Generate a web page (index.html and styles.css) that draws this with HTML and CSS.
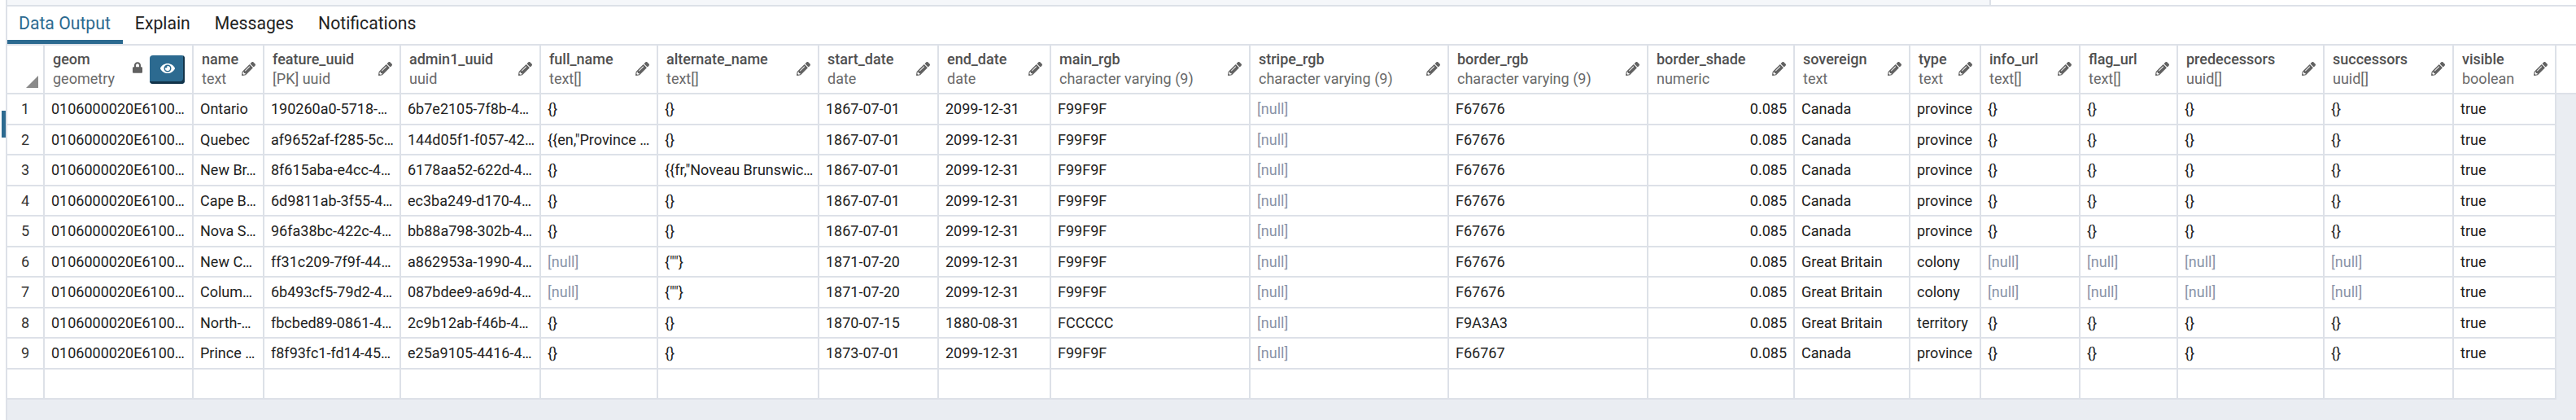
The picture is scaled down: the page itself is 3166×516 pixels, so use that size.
FILE: index.html
```html
<!DOCTYPE html>
<html lang="en">
<head>
    <meta charset="UTF-8">
    <title>Data Output</title>
    <link rel="stylesheet" href="styles.css">
</head>
<body>
<svg class="defs" aria-hidden="true">
    <symbol id="pencil" viewBox="0 0 512 512"><path d="M497.9 142.1l-46.1 46.1c-4.7 4.7-12.3 4.7-17 0l-111-111c-4.7-4.7-4.7-12.3 0-17l46.1-46.1c18.7-18.7 49.1-18.7 67.9 0l60.1 60.1c18.8 18.7 18.8 49.1 0 67.9zM284.2 99.8L21.6 362.4.4 483.9c-2.9 16.4 11.4 30.6 27.8 27.8l121.5-21.3 262.6-262.6c4.7-4.7 4.7-12.3 0-17l-111-111c-4.8-4.7-12.4-4.7-17.1 0zM124.1 339.9c-5.5-5.5-5.5-14.3 0-19.8l154-154c5.5-5.5 14.3-5.5 19.8 0s5.5 14.3 0 19.8l-154 154c-5.5 5.5-14.3 5.5-19.8 0zM88 424h48v36.3l-64.5 11.3-31.1-31.1L51.7 376H88v48z"/></symbol>
</svg>

<div class="side-mark"></div>

<div class="panel">
    <div class="top-strip"><div class="top-strip-left"></div></div>

    <div class="tabs">
        <a class="tab active">Data Output</a>
        <a class="tab">Explain</a>
        <a class="tab">Messages</a>
        <a class="tab">Notifications</a>
    </div>

    <div class="grid-wrap">
        <table class="grid">
            <colgroup>
                <col class="w-46"><col class="w-183"><col class="w-87"><col class="w-168"><col class="w-172">
                <col class="w-144"><col class="w-198"><col class="w-147"><col class="w-138"><col class="w-245">
                <col class="w-244"><col class="w-245"><col class="w-180"><col class="w-142"><col class="w-87">
                <col class="w-122"><col class="w-120"><col class="w-180"><col class="w-159"><col class="w-126">
                <col>
            </colgroup>
            <thead>
                <tr>
                    <th class="corner"><span class="sort-mark"></span></th>
                    <th><div class="head">
                        <div class="head-text"><div class="col-name">geom</div><div class="col-type">geometry</div></div>
                        <svg class="lock" viewBox="0 0 448 512"><path d="M400 224h-24v-72C376 68.2 307.8 0 224 0S72 68.2 72 152v72H48c-26.5 0-48 21.5-48 48v192c0 26.5 21.5 48 48 48h352c26.5 0 48-21.5 48-48V272c0-26.5-21.5-48-48-48zm-104 0H152v-72c0-39.7 32.3-72 72-72s72 32.3 72 72v72z"/></svg>
                        <button class="view-btn"><svg viewBox="0 0 576 512"><path d="M572.52 241.4C518.29 135.59 410.93 64 288 64S57.68 135.64 3.48 241.41a32.35 32.35 0 0 0 0 29.19C57.71 376.41 165.07 448 288 448s230.32-71.64 284.52-177.41a32.35 32.35 0 0 0 0-29.19zM288 400a144 144 0 1 1 144-144 143.93 143.93 0 0 1-144 144zm0-240a95.31 95.31 0 0 0-25.31 3.79 47.85 47.85 0 0 1-66.9 66.9A95.78 95.78 0 1 0 288 160z"/></svg></button>
                    </div></th>
                    <th><div class="head"><div class="head-text"><div class="col-name">name</div><div class="col-type">text</div></div><svg class="pencil"><use href="#pencil"/></svg></div></th>
                    <th><div class="head"><div class="head-text"><div class="col-name">feature_uuid</div><div class="col-type">[PK] uuid</div></div><svg class="pencil"><use href="#pencil"/></svg></div></th>
                    <th><div class="head"><div class="head-text"><div class="col-name">admin1_uuid</div><div class="col-type">uuid</div></div><svg class="pencil"><use href="#pencil"/></svg></div></th>
                    <th><div class="head"><div class="head-text"><div class="col-name">full_name</div><div class="col-type">text[]</div></div><svg class="pencil"><use href="#pencil"/></svg></div></th>
                    <th><div class="head"><div class="head-text"><div class="col-name">alternate_name</div><div class="col-type">text[]</div></div><svg class="pencil"><use href="#pencil"/></svg></div></th>
                    <th><div class="head"><div class="head-text"><div class="col-name">start_date</div><div class="col-type">date</div></div><svg class="pencil"><use href="#pencil"/></svg></div></th>
                    <th><div class="head"><div class="head-text"><div class="col-name">end_date</div><div class="col-type">date</div></div><svg class="pencil"><use href="#pencil"/></svg></div></th>
                    <th><div class="head"><div class="head-text"><div class="col-name">main_rgb</div><div class="col-type">character varying (9)</div></div><svg class="pencil"><use href="#pencil"/></svg></div></th>
                    <th><div class="head"><div class="head-text"><div class="col-name">stripe_rgb</div><div class="col-type">character varying (9)</div></div><svg class="pencil"><use href="#pencil"/></svg></div></th>
                    <th><div class="head"><div class="head-text"><div class="col-name">border_rgb</div><div class="col-type">character varying (9)</div></div><svg class="pencil"><use href="#pencil"/></svg></div></th>
                    <th><div class="head"><div class="head-text"><div class="col-name">border_shade</div><div class="col-type">numeric</div></div><svg class="pencil"><use href="#pencil"/></svg></div></th>
                    <th><div class="head"><div class="head-text"><div class="col-name">sovereign</div><div class="col-type">text</div></div><svg class="pencil"><use href="#pencil"/></svg></div></th>
                    <th><div class="head"><div class="head-text"><div class="col-name">type</div><div class="col-type">text</div></div><svg class="pencil"><use href="#pencil"/></svg></div></th>
                    <th><div class="head"><div class="head-text"><div class="col-name">info_url</div><div class="col-type">text[]</div></div><svg class="pencil"><use href="#pencil"/></svg></div></th>
                    <th><div class="head"><div class="head-text"><div class="col-name">flag_url</div><div class="col-type">text[]</div></div><svg class="pencil"><use href="#pencil"/></svg></div></th>
                    <th><div class="head"><div class="head-text"><div class="col-name">predecessors</div><div class="col-type">uuid[]</div></div><svg class="pencil"><use href="#pencil"/></svg></div></th>
                    <th><div class="head"><div class="head-text"><div class="col-name">successors</div><div class="col-type">uuid[]</div></div><svg class="pencil"><use href="#pencil"/></svg></div></th>
                    <th><div class="head"><div class="head-text"><div class="col-name">visible</div><div class="col-type">boolean</div></div><svg class="pencil"><use href="#pencil"/></svg></div></th>
                    <th class="filler"></th>
                </tr>
            </thead>
            <tbody>
                <tr><td class="num">1</td><td>0106000020E6100…</td><td>Ontario</td><td>190260a0-5718-…</td><td>6b7e2105-7f8b-4…</td><td>{}</td><td>{}</td><td>1867-07-01</td><td>2099-12-31</td><td>F99F9F</td><td class="null">[null]</td><td>F67676</td><td class="right">0.085</td><td>Canada</td><td>province</td><td>{}</td><td>{}</td><td>{}</td><td>{}</td><td>true</td></tr>
                <tr><td class="num">2</td><td>0106000020E6100…</td><td>Quebec</td><td>af9652af-f285-5c…</td><td>144d05f1-f057-42…</td><td>{{en,"Province …</td><td>{}</td><td>1867-07-01</td><td>2099-12-31</td><td>F99F9F</td><td class="null">[null]</td><td>F67676</td><td class="right">0.085</td><td>Canada</td><td>province</td><td>{}</td><td>{}</td><td>{}</td><td>{}</td><td>true</td></tr>
                <tr><td class="num">3</td><td>0106000020E6100…</td><td>New Br…</td><td>8f615aba-e4cc-4…</td><td>6178aa52-622d-4…</td><td>{}</td><td>{{fr,"Noveau Brunswic…</td><td>1867-07-01</td><td>2099-12-31</td><td>F99F9F</td><td class="null">[null]</td><td>F67676</td><td class="right">0.085</td><td>Canada</td><td>province</td><td>{}</td><td>{}</td><td>{}</td><td>{}</td><td>true</td></tr>
                <tr><td class="num">4</td><td>0106000020E6100…</td><td>Cape B…</td><td>6d9811ab-3f55-4…</td><td>ec3ba249-d170-4…</td><td>{}</td><td>{}</td><td>1867-07-01</td><td>2099-12-31</td><td>F99F9F</td><td class="null">[null]</td><td>F67676</td><td class="right">0.085</td><td>Canada</td><td>province</td><td>{}</td><td>{}</td><td>{}</td><td>{}</td><td>true</td></tr>
                <tr><td class="num">5</td><td>0106000020E6100…</td><td>Nova S…</td><td>96fa38bc-422c-4…</td><td>bb88a798-302b-4…</td><td>{}</td><td>{}</td><td>1867-07-01</td><td>2099-12-31</td><td>F99F9F</td><td class="null">[null]</td><td>F67676</td><td class="right">0.085</td><td>Canada</td><td>province</td><td>{}</td><td>{}</td><td>{}</td><td>{}</td><td>true</td></tr>
                <tr><td class="num">6</td><td>0106000020E6100…</td><td>New C…</td><td>ff31c209-7f9f-44…</td><td>a862953a-1990-4…</td><td class="null">[null]</td><td>{""}</td><td>1871-07-20</td><td>2099-12-31</td><td>F99F9F</td><td class="null">[null]</td><td>F67676</td><td class="right">0.085</td><td>Great Britain</td><td>colony</td><td class="null">[null]</td><td class="null">[null]</td><td class="null">[null]</td><td class="null">[null]</td><td>true</td></tr>
                <tr><td class="num">7</td><td>0106000020E6100…</td><td>Colum…</td><td>6b493cf5-79d2-4…</td><td>087bdee9-a69d-4…</td><td class="null">[null]</td><td>{""}</td><td>1871-07-20</td><td>2099-12-31</td><td>F99F9F</td><td class="null">[null]</td><td>F67676</td><td class="right">0.085</td><td>Great Britain</td><td>colony</td><td class="null">[null]</td><td class="null">[null]</td><td class="null">[null]</td><td class="null">[null]</td><td>true</td></tr>
                <tr><td class="num">8</td><td>0106000020E6100…</td><td>North-…</td><td>fbcbed89-0861-4…</td><td>2c9b12ab-f46b-4…</td><td>{}</td><td>{}</td><td>1870-07-15</td><td>1880-08-31</td><td>FCCCCC</td><td class="null">[null]</td><td>F9A3A3</td><td class="right">0.085</td><td>Great Britain</td><td>territory</td><td>{}</td><td>{}</td><td>{}</td><td>{}</td><td>true</td></tr>
                <tr><td class="num">9</td><td>0106000020E6100…</td><td>Prince …</td><td>f8f93fc1-fd14-45…</td><td>e25a9105-4416-4…</td><td>{}</td><td>{}</td><td>1873-07-01</td><td>2099-12-31</td><td>F99F9F</td><td class="null">[null]</td><td>F66767</td><td class="right">0.085</td><td>Canada</td><td>province</td><td>{}</td><td>{}</td><td>{}</td><td>{}</td><td>true</td></tr>
                <tr><td></td><td></td><td></td><td></td><td></td><td></td><td></td><td></td><td></td><td></td><td></td><td></td><td></td><td></td><td></td><td></td><td></td><td></td><td></td><td></td></tr>
            </tbody>
        </table>
    </div>
</div>
</body>
</html>
```

FILE: styles.css
```css
html, body {
  height: 100%;
}
body {
  margin: 0;
  background: #fff;
  color: #222;
  font-family: 'Roboto', sans-serif;
  font-size: 18px;
  overflow: hidden;
}
.defs {
  display: none;
}

/* little blue splitter handle left of the panel */
.side-mark {
  position: absolute;
  left: 2px;
  top: 136px;
  width: 5px;
  height: 33px;
  background: #2c6a90;
}

.panel {
  height: 100%;
  margin-left: 7px;
  border-left: 2px solid #dde1e8;
  display: flex;
  flex-direction: column;
}

.top-strip {
  height: 6px;
  flex: none;
  border-bottom: 2px solid #dde1e8;
}
.top-strip-left {
  width: 2436px;
  height: 100%;
  background: #f5f7fa;
  border-right: 2px solid #dde1e8;
}

.tabs {
  height: 46px;
  flex: none;
  display: flex;
  border-bottom: 2px solid #dde1e8;
}
.tab {
  height: 46px;
  box-sizing: border-box;
  padding: 0 15px;
  line-height: 42px;
  font-size: 21.2px;
  color: #222;
}
.tab.active {
  padding-left: 14px;
  color: #2c6a90;
  border-bottom: 5px solid #2c6a90;
}

.grid-wrap {
  flex: 1;
  background: #eaedf2;
}
.grid {
  width: 100%;
  table-layout: fixed;
  border-collapse: separate;
  border-spacing: 0;
}

.w-46 { width: 46px; }
.w-183 { width: 183px; }
.w-87 { width: 87px; }
.w-168 { width: 168px; }
.w-172 { width: 172px; }
.w-144 { width: 144px; }
.w-198 { width: 198px; }
.w-147 { width: 147px; }
.w-138 { width: 138px; }
.w-245 { width: 245px; }
.w-244 { width: 244px; }
.w-180 { width: 180px; }
.w-142 { width: 142px; }
.w-122 { width: 122px; }
.w-120 { width: 120px; }
.w-159 { width: 159px; }
.w-126 { width: 126px; }

th {
  height: 60px;
  box-sizing: border-box;
  padding: 0 9px 0 10px;
  background: #fff;
  border-right: 2px solid #dde1e8;
  border-bottom: 2px solid #dde1e8;
  text-align: left;
  font-weight: normal;
}
th.filler {
  border-right: none;
}
th.corner {
  padding: 0;
  vertical-align: bottom;
}
.sort-mark {
  display: block;
  width: 0;
  height: 0;
  margin: 0 6px 6px auto;
  border-style: solid;
  border-width: 0 0 15px 15px;
  border-color: transparent transparent #8a8a8a transparent;
}

.head {
  display: flex;
  align-items: center;
}
.head-text {
  flex: 1;
  min-width: 0;
  white-space: nowrap;
  line-height: 24px;
}
.col-name {
  font-weight: 500;
  color: #505050;
}
.col-type {
  color: #6a6a6a;
}
.pencil {
  flex: none;
  width: 17px;
  height: 17px;
  fill: #616161;
  margin-bottom: 2px;
}
.lock {
  flex: none;
  width: 12px;
  height: 14px;
  fill: #616161;
  margin: 0 9px 4px 0;
}
.view-btn {
  flex: none;
  width: 43px;
  height: 35px;
  padding: 0 0 2px 0;
  border: none;
  border-radius: 4px;
  background: #2c6a90;
  box-shadow: inset -2px -3px 0 #123349;
  display: flex;
  align-items: center;
  justify-content: center;
}
.view-btn svg {
  width: 18px;
  height: 16px;
  fill: #fff;
}

td {
  height: 37.5px;
  box-sizing: border-box;
  padding: 0 8px;
  background: #fff;
  border-right: 2px solid #dde1e8;
  border-bottom: 2px solid #dde1e8;
  white-space: nowrap;
  overflow: hidden;
}
td.num {
  text-align: center;
  color: #333;
}
td.null {
  color: #8a94a8;
}
td.right {
  text-align: right;
}
```
